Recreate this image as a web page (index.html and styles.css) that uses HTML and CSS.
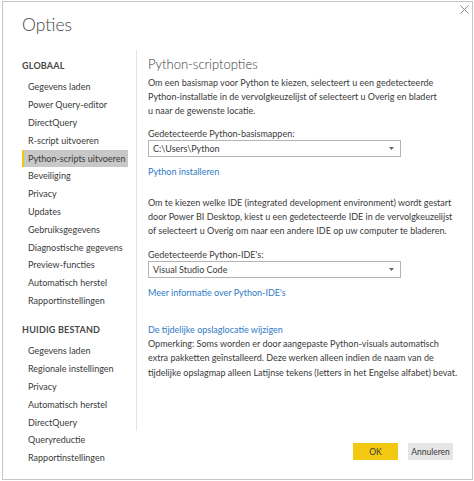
FILE: index.html
```html
<!DOCTYPE html>
<html lang="nl">
<head>
<meta charset="utf-8">
<title>Opties</title>
<link rel="stylesheet" href="styles.css">
</head>
<body>
<div class="dialog">
  <header class="header">
    <h1 class="title">Opties</h1>
    <svg class="close" width="9" height="9" viewBox="0 0 9 9"><path d="M0.5 0.5 L8.5 8.5 M8.5 0.5 L0.5 8.5" stroke="#8a8a8a" stroke-width="1" fill="none"/></svg>
  </header>
  <div class="main">
    <nav class="sidebar">
      <h3 class="section">GLOBAAL</h3>
      <ul class="list">
        <li class="item">Gegevens laden</li>
        <li class="item">Power Query-editor</li>
        <li class="item">DirectQuery</li>
        <li class="item">R-script uitvoeren</li>
        <li class="item active">Python-scripts uitvoeren</li>
        <li class="item">Beveiliging</li>
        <li class="item">Privacy</li>
        <li class="item">Updates</li>
        <li class="item">Gebruiksgegevens</li>
        <li class="item">Diagnostische gegevens</li>
        <li class="item">Preview-functies</li>
        <li class="item">Automatisch herstel</li>
        <li class="item">Rapportinstellingen</li>
      </ul>
      <h3 class="section section-2">HUIDIG BESTAND</h3>
      <ul class="list">
        <li class="item">Gegevens laden</li>
        <li class="item">Regionale instellingen</li>
        <li class="item">Privacy</li>
        <li class="item">Automatisch herstel</li>
        <li class="item">DirectQuery</li>
        <li class="item">Queryreductie</li>
        <li class="item">Rapportinstellingen</li>
      </ul>
    </nav>
    <div class="right">
      <section class="content">
        <h2 class="heading">Python-scriptopties</h2>
        <p class="para p1">Om een basismap voor Python te kiezen, selecteert u een gedetecteerde<br>Python-installatie in de vervolgkeuzelijst of selecteert u Overig en bladert<br>u naar de gewenste locatie.</p>
        <div class="label l1">Gedetecteerde Python-basismappen:</div>
        <div class="select"><span>C:\Users\Python</span><svg class="arrow" width="5" height="3" viewBox="0 0 5 3"><path d="M0 0 L5 0 L2.5 3 Z" fill="#666"/></svg></div>
        <a class="link lk1">Python installeren</a>
        <p class="para p2">Om te kiezen welke IDE (integrated development environment) wordt gestart<br>door Power BI Desktop, kiest u een gedetecteerde IDE in de vervolgkeuzelijst<br>of selecteert u Overig om naar een andere IDE op uw computer te bladeren.</p>
        <div class="label l2">Gedetecteerde Python-IDE's:</div>
        <div class="select"><span>Visual Studio Code</span><svg class="arrow" width="5" height="3" viewBox="0 0 5 3"><path d="M0 0 L5 0 L2.5 3 Z" fill="#666"/></svg></div>
        <a class="link lk2">Meer informatie over Python-IDE's</a>
        <a class="link lk3">De tijdelijke opslaglocatie wijzigen</a>
        <p class="para p3">Opmerking: Soms worden er door aangepaste Python-visuals automatisch<br>extra pakketten geïnstalleerd. Deze werken alleen indien de naam van de<br>tijdelijke opslagmap alleen Latijnse tekens (letters in het Engelse alfabet) bevat.</p>
      </section>
      <footer class="footer">
        <button class="btn btn-ok">OK</button>
        <button class="btn btn-cancel">Annuleren</button>
      </footer>
    </div>
  </div>
</div>
</body>
</html>
```
FILE: styles.css
```css
* {
  box-sizing: border-box;
  margin: 0;
  padding: 0;
}

html, body {
  width: 474px;
  height: 481px;
  background: #ffffff;
  overflow: hidden;
}

body {
  font-family: Lato, "Open Sans", sans-serif;
  font-size: 9px;
  color: #3a3a3a;
}

.dialog {
  margin: 1px 0 0 2px;
  width: 471px;
  height: 479px;
  border: 1px solid #c6c6c6;
  display: flex;
  flex-direction: column;
  position: relative;
  background: #ffffff;
}

.header {
  height: 48px;
  padding: 9px 0 0 19px;
}

.title {
  font-size: 17.5px;
  font-weight: 300;
  line-height: 28px;
  color: #444444;
}

.close {
  position: absolute;
  top: 3px;
  right: 3px;
}

.main {
  flex: 1;
  display: flex;
}

.sidebar {
  width: 133px;
  padding: 7px 0 0 19px;
}

.section {
  font-size: 9px;
  font-weight: 700;
  line-height: 18px;
  color: #484848;
  letter-spacing: 0.2px;
}

.section-2 {
  margin-top: 11.2px;
}

.list {
  list-style: none;
  margin-top: 3.4px;
}

.item {
  width: 106px;
  line-height: 17.8px;
  height: 17.8px;
  padding-left: 6px;
  white-space: nowrap;
  color: #3a3a3a;
}

.item.active {
  background: #c8c8c8;
  border-left: 2px solid #f2c811;
  padding-left: 4px;
}

.right {
  flex: 1;
  display: flex;
  flex-direction: column;
}

.content {
  height: 381px;
  border-left: 1px solid #e3e3e3;
  padding: 4px 0 0 11px;
  display: flex;
  flex-direction: column;
  align-items: flex-start;
}

.heading {
  font-size: 13px;
  font-weight: 300;
  line-height: 20px;
  color: #3a3a3a;
}

.para {
  white-space: nowrap;
}

.p1 {
  margin-top: 2px;
  line-height: 13.8px;
}

.label {
  line-height: 12px;
}

.l1 {
  margin-top: 10.6px;
}

.l2 {
  margin-top: 10.1px;
}

.select {
  width: 253px;
  height: 17px;
  border: 1px solid #b4b4b4;
  display: flex;
  align-items: center;
  padding: 0 6px 0 4px;
  line-height: 15px;
}

.arrow {
  margin-left: auto;
}

.link {
  display: block;
  color: #2f7bc6;
  line-height: 14px;
}

.lk1 {
  margin-top: 7.7px;
}

.p2 {
  margin-top: 17px;
  line-height: 14.4px;
}

.lk2 {
  margin-top: 8.3px;
}

.lk3 {
  margin-top: 22.7px;
}

.p3 {
  line-height: 14.3px;
}

.footer {
  display: flex;
  justify-content: flex-end;
  gap: 10px;
  padding: 12px 19px 0 0;
}

.btn {
  width: 45px;
  height: 17px;
  border: none;
  font-family: Lato, "Open Sans", sans-serif;
  font-size: 8.5px;
  color: #3a3a3a;
}

.btn-ok {
  background: #f2c811;
}

.btn-cancel {
  background: #e6e6e6;
}
```
